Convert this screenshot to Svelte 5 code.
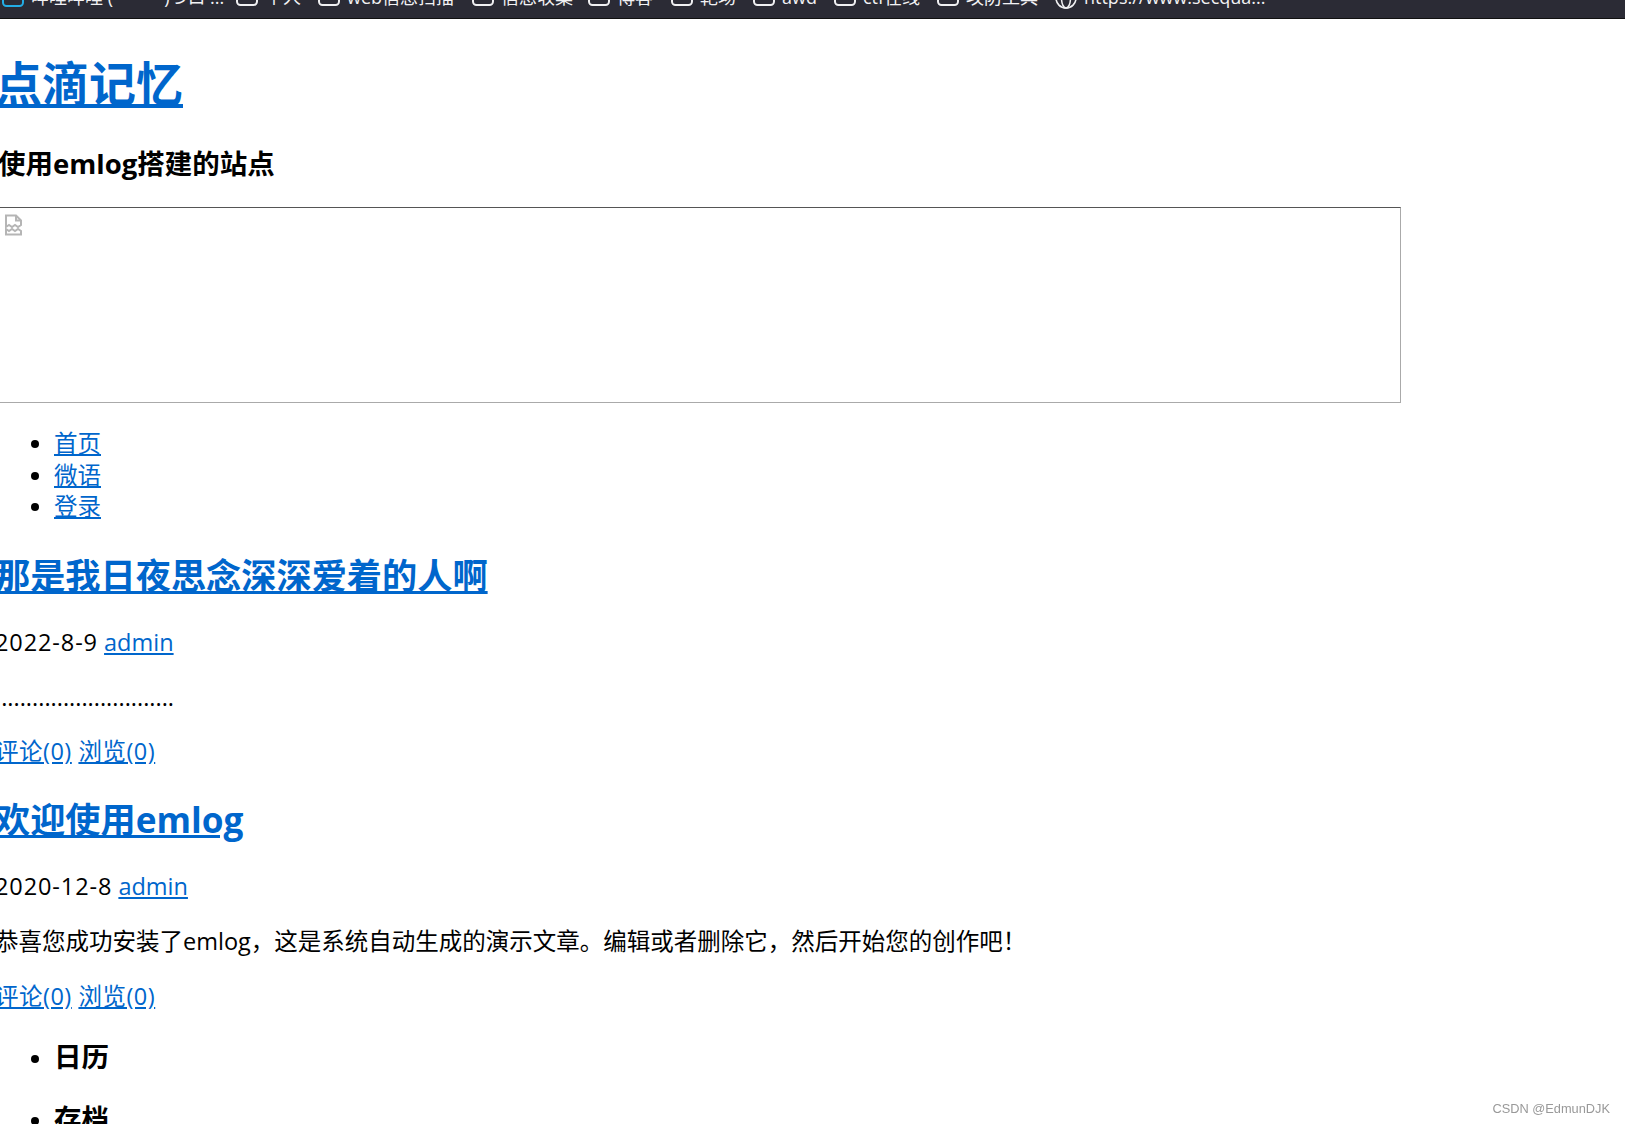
<script>
  // bookmarks along the top, the browser chrome is cut off by the crop
  const bookmarks = [
    { label: "哔哩哔哩 ( ゜- ゜)つロ ...", type: "site", width: 234 },
    { label: "个人", type: "folder", width: 82 },
    { label: "web信息扫描", type: "folder", width: 154 },
    { label: "信息收集", type: "folder", width: 116 },
    { label: "博客", type: "folder", width: 83 },
    { label: "靶场", type: "folder", width: 82 },
    { label: "awd", type: "folder", width: 81 },
    { label: "ctf在线", type: "folder", width: 103 },
    { label: "攻防工具", type: "folder", width: 118 },
    { label: "https://www.secqua...", type: "globe", width: 220 }
  ];

  const posts = [
    {
      title: "那是我日夜思念深深爱着的人啊",
      date: "2022-8-9",
      body: "............................."
    },
    {
      title: "欢迎使用emlog",
      date: "2020-12-8",
      body: "恭喜您成功安装了emlog，这是系统自动生成的演示文章。编辑或者删除它，然后开始您的创作吧！"
    }
  ];
</script>

<div class="topbar">
  {#each bookmarks as b}
    <div class="bookmark" style="width: {b.width}px">
      {#if b.type === "folder"}
        <svg width="22" height="18" viewBox="0 0 22 18"><rect x="1" y="-14" width="20" height="19" rx="3.5" fill="none" stroke="#f0f0f2" stroke-width="2" /></svg>
      {:else if b.type === "site"}
        <svg width="22" height="18" viewBox="0 0 22 18"><rect x="1" y="-14" width="20" height="20" rx="3.5" fill="none" stroke="#23ade5" stroke-width="2" /></svg>
      {:else}
        <svg width="22" height="18" viewBox="0 0 22 18"><circle cx="11" cy="-2" r="10" fill="none" stroke="#f0f0f2" stroke-width="1.6" /><ellipse cx="11" cy="-2" rx="4.5" ry="10" fill="none" stroke="#f0f0f2" stroke-width="1.5" /></svg>
      {/if}
      <span>{b.label}</span>
    </div>
  {/each}
</div>

<div class="page">
  <h1><a href="#top">点滴记忆</a></h1>
  <h3>使用emlog搭建的站点</h3>

  <div class="frame">
    <svg class="broken" width="20" height="22" viewBox="0 0 20 22">
      <path d="M2 11V1.5h10l5 5V11l-3 2-3-2-3 2-3-2-3 2z" fill="#fff" stroke="#b5b5b5" stroke-width="2" />
      <path d="M12 1.5v5h5" fill="none" stroke="#b5b5b5" stroke-width="2" />
      <path d="M2 15l3 2 3-2 3 2 3-2 3 2v3.5H2z" fill="#fff" stroke="#b5b5b5" stroke-width="2" />
    </svg>
  </div>

  <ul class="nav">
    <li><a href="#home">首页</a></li>
    <li><a href="#twitter">微语</a></li>
    <li><a href="#login">登录</a></li>
  </ul>

  {#each posts as post}
    <h2><a href="#post">{post.title}</a></h2>
    <p class="meta"><span class="date">{post.date}</span> <a href="#author">admin</a></p>
    <p class="body">{post.body}</p>
    <p class="links"><a href="#comments">评论(0)</a> <a href="#views">浏览(0)</a></p>
  {/each}

  <ul class="widgets">
    <li><h3>日历</h3></li>
    <li><h3>存档</h3></li>
  </ul>
</div>

<div class="watermark">CSDN @EdmunDJK</div>

<style>
  :global(body) {
    background: #fff;
    overflow: hidden;
    height: 1124px;
  }

  .topbar {
    display: flex;
    height: 18px;
    overflow: hidden;
    background: #2b2b35;
    border-bottom: 1px solid #111;
    padding-left: 2px;
  }

  .bookmark {
    display: flex;
    flex-shrink: 0;
    gap: 7px;
    height: 18px;
    color: #f2f2f4;
    font-family: "Open Sans", "Noto Sans CJK SC", sans-serif;
    font-size: 18px;
    line-height: 24px;
    white-space: nowrap;
  }

  .bookmark svg {
    flex-shrink: 0;
  }

  .bookmark span {
    display: block;
    height: 24px;
    margin-top: -15px;
  }

  .page {
    margin-left: -5px;
    color: #000;
    font-family: "Open Sans", "Noto Sans CJK SC", sans-serif;
    font-size: 23.5px;
    line-height: 32px;
  }

  a {
    color: #0066cc;
  }

  h1 {
    margin: 0;
    padding-top: 32px;
    font-size: 47px;
    line-height: 64px;
  }

  .page > h3 {
    margin: 30px 0 0 3px;
    font-size: 27.5px;
    line-height: 38px;
  }

  .frame {
    box-sizing: border-box;
    width: 1406px;
    height: 196px;
    margin-top: 24px;
    border: 1px solid #aaa;
    border-top-color: #555;
    border-left-color: #555;
    padding: 6px 0 0 8px;
  }

  .broken {
    display: block;
  }

  ul {
    margin: 0;
    padding-left: 59px;
  }

  .nav {
    margin-top: 25px;
  }

  .nav li {
    line-height: 31.5px;
  }

  h2 {
    margin: 0;
    padding-top: 28px;
    font-size: 35.2px;
    line-height: 48px;
  }

  p {
    margin: 0;
  }

  .meta {
    margin-top: 27px;
  }

  .date {
    letter-spacing: 0.9px;
  }

  .body {
    margin-top: 23px;
  }

  .links {
    margin-top: 22.5px;
    letter-spacing: 0.5px;
  }

  .widgets {
    margin-top: 26px;
  }

  .widgets li {
    margin-bottom: 24px;
  }

  .widgets h3 {
    margin: 0;
    font-size: 27.5px;
    line-height: 38px;
  }

  .watermark {
    position: fixed;
    right: 15px;
    bottom: 7px;
    color: #999;
    font-family: "Liberation Sans", sans-serif;
    font-size: 12.8px;
    line-height: 16px;
  }
</style>
